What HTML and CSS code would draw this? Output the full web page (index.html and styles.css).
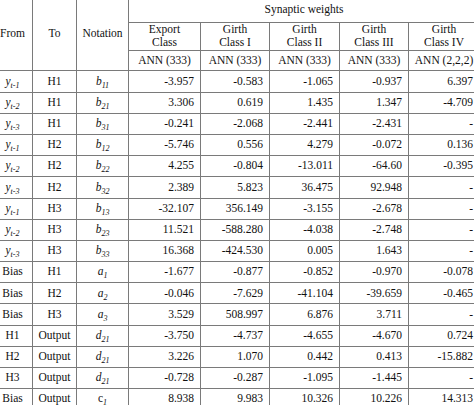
FILE: index.html
```html
<!DOCTYPE html>
<html>
<head>
<meta charset="utf-8">
<link rel="stylesheet" href="styles.css">
</head>
<body>
<table class="weights">
  <colgroup>
    <col class="c-from"><col class="c-to"><col class="c-not">
    <col class="c-exp"><col class="c-g1"><col class="c-g2"><col class="c-g3"><col class="c-g4">
  </colgroup>
  <thead>
    <tr class="hr1">
      <th rowspan="3">From</th>
      <th rowspan="3">To</th>
      <th rowspan="3">Notation</th>
      <th colspan="5">Synaptic weights</th>
    </tr>
    <tr class="hr2">
      <th>Export<br>Class</th>
      <th>Girth<br>Class I</th>
      <th>Girth<br>Class II</th>
      <th>Girth<br>Class III</th>
      <th>Girth<br>Class IV</th>
    </tr>
    <tr class="hr3">
      <th>ANN (333)</th>
      <th>ANN (333)</th>
      <th>ANN (333)</th>
      <th>ANN (333)</th>
      <th>ANN (2,2,2)</th>
    </tr>
  </thead>
  <tbody>
    <tr><td class="lbl"><i>y</i><sub>t-1</sub></td><td>H1</td><td><i>b</i><sub>11</sub></td><td class="n">-3.957</td><td class="n">-0.583</td><td class="n">-1.065</td><td class="n">-0.937</td><td class="n">6.397</td></tr>
    <tr><td class="lbl"><i>y</i><sub>t-2</sub></td><td>H1</td><td><i>b</i><sub>21</sub></td><td class="n">3.306</td><td class="n">0.619</td><td class="n">1.435</td><td class="n">1.347</td><td class="n">-4.709</td></tr>
    <tr><td class="lbl"><i>y</i><sub>t-3</sub></td><td>H1</td><td><i>b</i><sub>31</sub></td><td class="n">-0.241</td><td class="n">-2.068</td><td class="n">-2.441</td><td class="n">-2.431</td><td class="n">-</td></tr>
    <tr><td class="lbl"><i>y</i><sub>t-1</sub></td><td>H2</td><td><i>b</i><sub>12</sub></td><td class="n">-5.746</td><td class="n">0.556</td><td class="n">4.279</td><td class="n">-0.072</td><td class="n">0.136</td></tr>
    <tr><td class="lbl"><i>y</i><sub>t-2</sub></td><td>H2</td><td><i>b</i><sub>22</sub></td><td class="n">4.255</td><td class="n">-0.804</td><td class="n">-13.011</td><td class="n">-64.60</td><td class="n">-0.395</td></tr>
    <tr><td class="lbl"><i>y</i><sub>t-3</sub></td><td>H2</td><td><i>b</i><sub>32</sub></td><td class="n">2.389</td><td class="n">5.823</td><td class="n">36.475</td><td class="n">92.948</td><td class="n">-</td></tr>
    <tr><td class="lbl"><i>y</i><sub>t-1</sub></td><td>H3</td><td><i>b</i><sub>13</sub></td><td class="n">-32.107</td><td class="n">356.149</td><td class="n">-3.155</td><td class="n">-2.678</td><td class="n">-</td></tr>
    <tr><td class="lbl"><i>y</i><sub>t-2</sub></td><td>H3</td><td><i>b</i><sub>23</sub></td><td class="n">11.521</td><td class="n">-588.280</td><td class="n">-4.038</td><td class="n">-2.748</td><td class="n">-</td></tr>
    <tr><td class="lbl"><i>y</i><sub>t-3</sub></td><td>H3</td><td><i>b</i><sub>33</sub></td><td class="n">16.368</td><td class="n">-424.530</td><td class="n">0.005</td><td class="n">1.643</td><td class="n">-</td></tr>
    <tr><td>Bias</td><td>H1</td><td><i>a</i><sub>1</sub></td><td class="n">-1.677</td><td class="n">-0.877</td><td class="n">-0.852</td><td class="n">-0.970</td><td class="n">-0.078</td></tr>
    <tr><td>Bias</td><td>H2</td><td><i>a</i><sub>2</sub></td><td class="n">-0.046</td><td class="n">-7.629</td><td class="n">-41.104</td><td class="n">-39.659</td><td class="n">-0.465</td></tr>
    <tr><td>Bias</td><td>H3</td><td><i>a</i><sub>3</sub></td><td class="n">3.529</td><td class="n">508.997</td><td class="n">6.876</td><td class="n">3.711</td><td class="n">-</td></tr>
    <tr><td>H1</td><td>Output</td><td><i>d</i><sub>21</sub></td><td class="n">-3.750</td><td class="n">-4.737</td><td class="n">-4.655</td><td class="n">-4.670</td><td class="n">0.724</td></tr>
    <tr><td>H2</td><td>Output</td><td><i>d</i><sub>21</sub></td><td class="n">3.226</td><td class="n">1.070</td><td class="n">0.442</td><td class="n">0.413</td><td class="n">-15.882</td></tr>
    <tr><td>H3</td><td>Output</td><td><i>d</i><sub>21</sub></td><td class="n">-0.728</td><td class="n">-0.287</td><td class="n">-1.095</td><td class="n">-1.445</td><td class="n">-</td></tr>
    <tr><td>Bias</td><td>Output</td><td>c<sub>1</sub></td><td class="n">8.938</td><td class="n">9.983</td><td class="n">10.326</td><td class="n">10.226</td><td class="n">14.313</td></tr>
  </tbody>
</table>
</body>
</html>
```

FILE: styles.css
```css
html, body {
  margin: 0;
  padding: 0;
  background: #ffffff;
  overflow: hidden;
}

body {
  width: 474px;
  height: 405px;
}

.weights {
  border-collapse: collapse;
  table-layout: fixed;
  width: 487px;
  margin: -3px 0 0 -8px;
  font-family: "Liberation Serif", "Times New Roman", serif;
  font-size: 11.5px;
  color: #111111;
}

.c-from { width: 40px; }
.c-to { width: 44px; }
.c-not { width: 52px; }
.c-exp { width: 72px; }
.c-g1 { width: 69px; }
.c-g2 { width: 70px; }
.c-g3 { width: 69px; }
.c-g4 { width: 71px; }

.weights th,
.weights td {
  border: 1px solid #7a7a7a;
  padding: 0 2px;
  line-height: 13.7px;
  font-weight: normal;
  text-align: center;
  vertical-align: middle;
  white-space: nowrap;
  overflow: hidden;
}

.hr1 { height: 24.5px; }
.hr2 { height: 27.5px; }
.hr3 { height: 20.5px; }

.weights tbody tr { height: 21.2px; }

.weights td.n {
  text-align: right;
  padding-right: 6px;
}

.weights i {
  font-style: italic;
}

.weights sub {
  font-size: 8px;
  font-style: italic;
  line-height: 0;
  vertical-align: -3px;
}
```
